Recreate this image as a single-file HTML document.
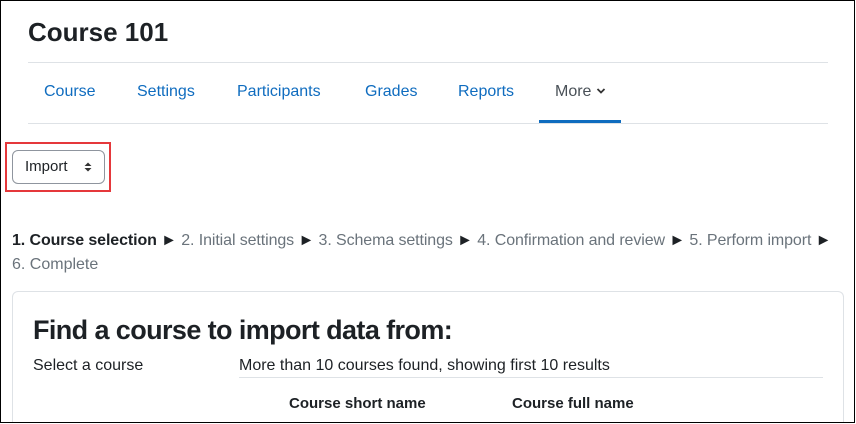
<!DOCTYPE html>
<html><head><style>
*{margin:0;padding:0;box-sizing:border-box}
html,body{width:856px;height:424px;overflow:hidden}
body{background:#fff;font-family:"Liberation Sans",Arial,sans-serif;color:#1d2125;position:relative}
.frame{position:absolute;left:0;top:0;width:855px;height:423px;border:1.5px solid #000;z-index:5}
.a{position:absolute;white-space:nowrap}
.nav{color:#0f6cbf;font-size:16px;top:83px}
.line{position:absolute;height:1px;background:#dee2e6}
</style></head><body>
<div class="frame"></div>
<div class="a" style="left:28px;top:17px;font-size:26px;font-weight:bold;color:#1d2125">Course 101</div>
<div class="line" style="left:28px;top:62px;width:800px"></div>
<div class="a nav" style="left:44px">Course</div>
<div class="a nav" style="left:137px">Settings</div>
<div class="a nav" style="left:237px">Participants</div>
<div class="a nav" style="left:365px">Grades</div>
<div class="a nav" style="left:458px">Reports</div>
<div class="a nav" style="left:555px;color:#495057">More <svg width="10" height="8" viewBox="0 0 10 8" style="vertical-align:1px"><path d="M1.5 2 L5 5.5 L8.5 2" stroke="#333" stroke-width="1.8" fill="none"/></svg></div>
<div class="line" style="left:28px;top:123px;width:800px"></div>
<div style="position:absolute;left:539px;top:120px;width:82px;height:3px;background:#0f6cbf"></div>
<div style="position:absolute;left:5px;top:142px;width:106px;height:50px;border:2px solid #e5383b"></div>
<div style="position:absolute;left:12px;top:150px;width:93px;height:34px;border:1px solid #8f959e;border-radius:6px"></div>
<div class="a" style="left:25px;top:158px;font-size:15px;color:#1d2125">Import</div>
<svg class="a" style="left:83px;top:160px" width="10" height="14" viewBox="0 0 10 14"><path d="M1.5 6 L5 2.5 L8.5 6Z M1.5 8 L5 11.5 L8.5 8Z" fill="#333"/></svg>
<div class="a" style="left:12px;top:232px;font-size:16px;letter-spacing:-0.1px;color:#6a737b"><b style="color:#1d2125">1. Course selection ►</b> 2. Initial settings <span style="color:#1d2125">►</span> 3. Schema settings <span style="color:#1d2125">►</span> 4. Confirmation and review <span style="color:#1d2125">►</span> 5. Perform import <span style="color:#1d2125">►</span></div>
<div class="a" style="left:12px;top:256px;font-size:16px;color:#6a737b">6. Complete</div>
<div style="position:absolute;left:12px;top:291px;width:832px;height:132px;border:1px solid #dee2e6;border-bottom:none;border-radius:6px 6px 0 0"></div>
<div class="a" style="left:33px;top:315px;font-size:27px;letter-spacing:-0.6px;font-weight:bold;color:#1d2125">Find a course to import data from:</div>
<div class="a" style="left:33px;top:357px;font-size:16px">Select a course</div>
<div class="a" style="left:239px;top:357px;font-size:16px">More than 10 courses found, showing first 10 results</div>
<div class="line" style="left:239px;top:377px;width:584px"></div>
<div class="a" style="left:289px;top:395px;font-size:15px;font-weight:bold">Course short name</div>
<div class="a" style="left:512px;top:395px;font-size:15px;font-weight:bold">Course full name</div>
</body></html>
